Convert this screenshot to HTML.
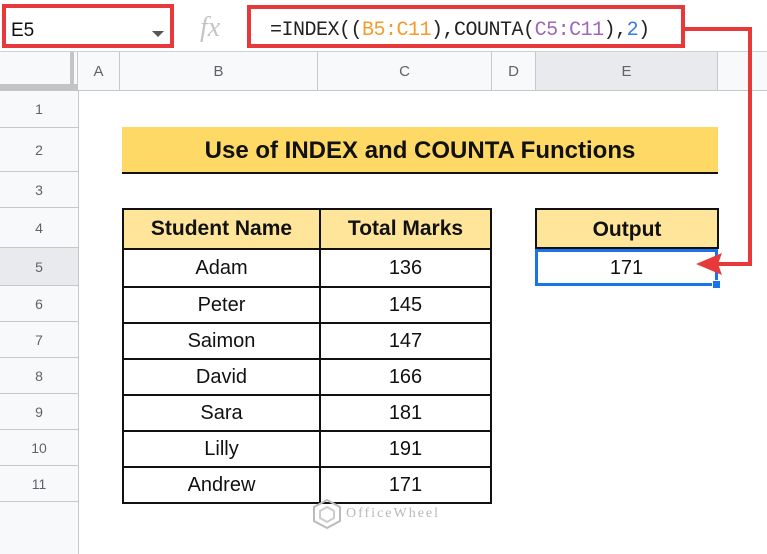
<!DOCTYPE html>
<html><head><style>
*{margin:0;padding:0;box-sizing:border-box}
body{width:767px;height:554px;position:relative;background:#fff;font-family:"Liberation Sans",Arial,sans-serif;overflow:hidden}
.a{position:absolute}
.rh{position:absolute;left:0;width:78px;border-bottom:1px solid #c8c8c8;background:#f8f9fa;color:#5f6368;font-size:14px;text-align:center;padding-left:0}
.ch{position:absolute;top:52px;height:39px;border-right:1px solid #c8c8c8;color:#5f6368;font-size:15px;text-align:center;line-height:39px;background:#f8f9fa;border-bottom:1px solid #c8c8c8}
table{border-collapse:collapse;position:absolute}
td{border:2px solid #111;text-align:center;font-size:20px;color:#111;padding:0}
</style></head><body>
<div class="a" style="left:0;top:0;width:767px;height:52px;background:#fff;border-bottom:1px solid #d0d0d0"></div>
<div class="a" style="left:2px;top:4px;width:172px;height:44px;border:4px solid #e8393a;background:#fff"></div>
<div class="a" style="left:11px;top:20px;font-size:19px;color:#111">E5</div>
<div class="a" style="left:152px;top:31px;width:0;height:0;border-left:6px solid transparent;border-right:6px solid transparent;border-top:6px solid #555"></div>
<div class="a" style="left:200px;top:12px;font-size:28px;color:#c4c4c4;font-family:'Liberation Serif',serif;font-style:italic">fx</div>
<div class="a" style="left:247px;top:5px;width:438px;height:43px;border:4px solid #e8393a;background:#fff"></div>
<div class="a" style="left:270px;top:19px;font-size:20px;color:#222;font-family:'Liberation Mono',monospace;letter-spacing:-0.5px">=INDEX((<span style="color:#f39c2b">B5:C11</span>),COUNTA(<span style="color:#a066b8">C5:C11</span>),<span style="color:#3b78e7">2</span>)</div>
<div class="a" style="left:0;top:52px;width:78px;height:39px;background:#f8f9fa;border-right:1px solid #c8c8c8"></div>
<div class="a" style="left:70px;top:52px;width:4px;height:34px;background:#c4c4c4"></div>
<div class="a" style="left:0;top:84px;width:78px;height:7px;background:#c4c4c4"></div>
<div class="ch" style="left:78px;width:42px">A</div>
<div class="ch" style="left:120px;width:198px">B</div>
<div class="ch" style="left:318px;width:174px">C</div>
<div class="ch" style="left:492px;width:44px">D</div>
<div class="ch" style="left:536px;width:182px;background:#e8eaed">E</div>
<div class="ch" style="left:718px;width:49px;border-right:none"></div>
<div class="a" style="left:78px;top:91px;width:1px;height:463px;background:#c8c8c8"></div>
<div class="rh" style="top:91px;height:37px;line-height:36px">1</div>
<div class="rh" style="top:128px;height:44px;line-height:44px">2</div>
<div class="rh" style="top:172px;height:36px;line-height:36px">3</div>
<div class="rh" style="top:208px;height:40px;line-height:40px">4</div>
<div class="rh" style="top:248px;height:38px;line-height:38px;background:#e8eaed">5</div>
<div class="rh" style="top:286px;height:36px;line-height:36px">6</div>
<div class="rh" style="top:322px;height:36px;line-height:36px">7</div>
<div class="rh" style="top:358px;height:36px;line-height:36px">8</div>
<div class="rh" style="top:394px;height:36px;line-height:36px">9</div>
<div class="rh" style="top:430px;height:36px;line-height:36px">10</div>
<div class="rh" style="top:466px;height:36px;line-height:36px">11</div>
<div class="a" style="left:0;top:502px;width:78px;height:52px;background:#f8f9fa"></div>
<div class="a" style="left:122px;top:127px;width:596px;height:47px;background:#ffd966;border-bottom:2px solid #111;font-weight:bold;font-size:24px;text-align:center;line-height:48px;color:#111">Use of INDEX and COUNTA Functions</div>
<table style="left:122px;top:208px;width:370px">
<tr style="height:40px;background:#ffe599"><td style="width:197px;font-weight:bold;font-size:21px">Student Name</td><td style="font-weight:bold;font-size:21px">Total Marks</td></tr>
<tr style="height:38px"><td>Adam</td><td>136</td></tr>
<tr style="height:36px"><td>Peter</td><td>145</td></tr>
<tr style="height:36px"><td>Saimon</td><td>147</td></tr>
<tr style="height:36px"><td>David</td><td>166</td></tr>
<tr style="height:36px"><td>Sara</td><td>181</td></tr>
<tr style="height:36px"><td>Lilly</td><td>191</td></tr>
<tr style="height:36px"><td>Andrew</td><td>171</td></tr>
</table>
<div class="a" style="left:535px;top:208px;width:184px;height:41px;background:#ffe599;border:2px solid #111;font-weight:bold;font-size:21px;text-align:center;line-height:39px;color:#111">Output</div>
<div class="a" style="left:535px;top:249px;width:183px;height:37px;border:3px solid #1a73e8;font-size:20px;text-align:center;line-height:33px;color:#111">171</div>
<div class="a" style="left:712px;top:280px;width:9px;height:9px;background:#1a73e8;border:1px solid #fff"></div>
<svg class="a" style="left:0;top:0" width="767" height="554">
<path d="M685 29 H750 V264 H718" fill="none" stroke="#e8393a" stroke-width="4"/>
<polygon points="696,264 722,253 718,264 722,275" fill="#e8393a"/>
</svg>
<svg class="a" style="left:312px;top:498px" width="30" height="32"><polygon points="15,2 28,9 28,23 15,30 2,23 2,9" fill="none" stroke="#bbb" stroke-width="2"/><polygon points="15,9 22,13 22,20 15,24 8,20 8,13" fill="none" stroke="#ccc" stroke-width="2"/></svg>
<div class="a" style="left:346px;top:506px;font-size:14px;color:#b8b8b8;letter-spacing:2px;font-family:'Liberation Serif',serif">OfficeWheel</div>
</body></html>
